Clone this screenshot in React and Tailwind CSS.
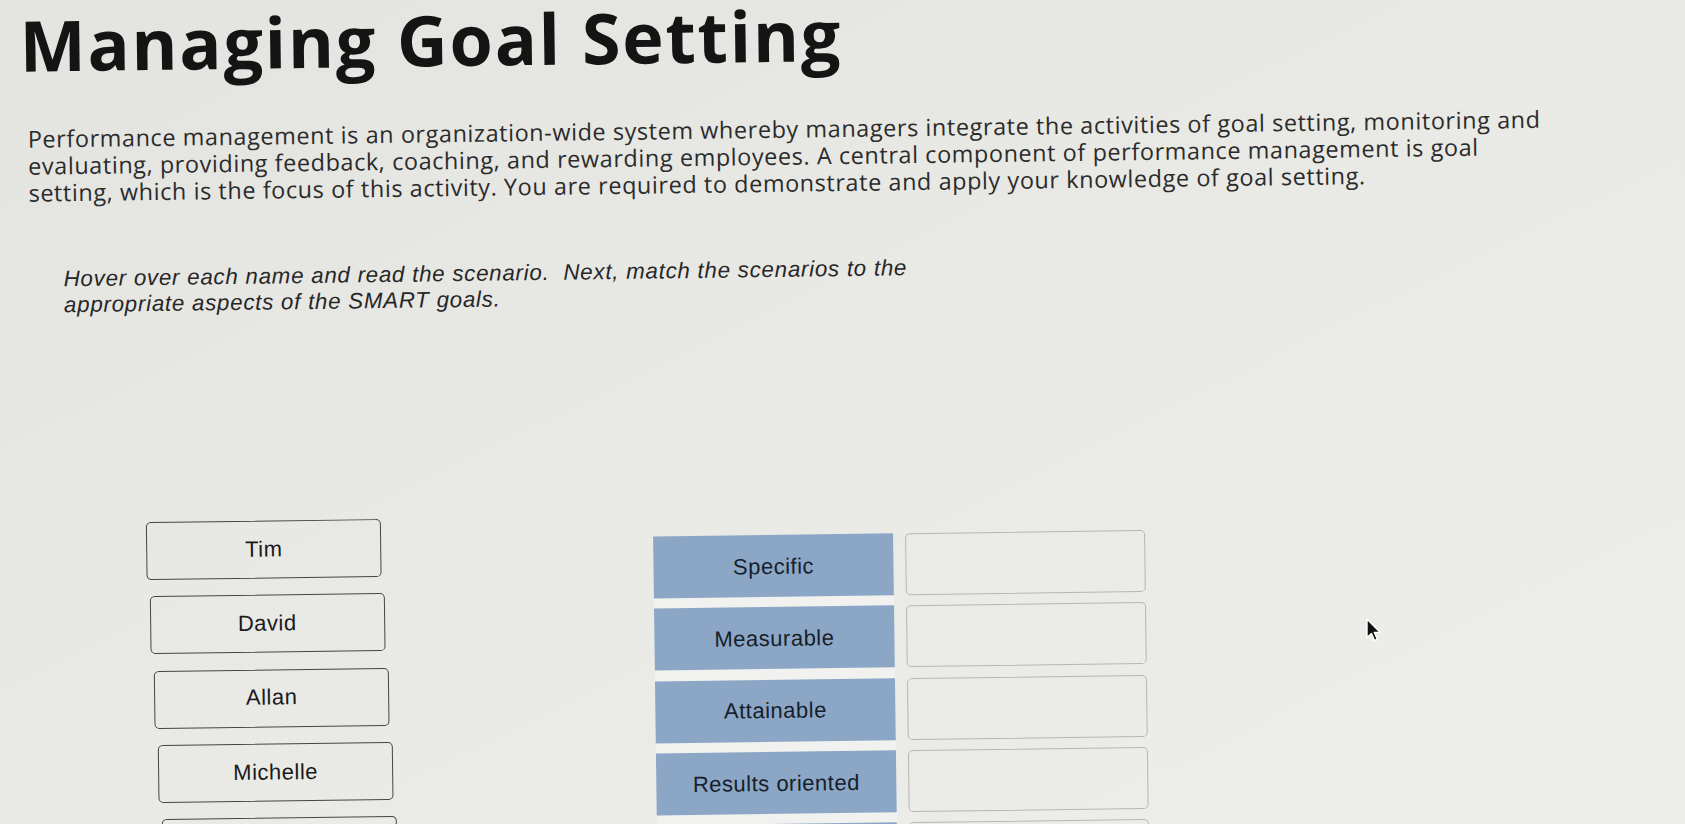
// App.jsx — goal-setting drag and drop activity
// the photo is tilted a little, so the sheet is turned by -0.75deg
const names = [
  { label: "Tim", shift: "ml-0" },
  { label: "David", shift: "ml-[2.5px]" },
  { label: "Allan", shift: "ml-[6px]" },
  { label: "Michelle", shift: "ml-[9px]" },
  { label: "", shift: "ml-[12px]" },
];

const aspects = ["Specific", "Measurable", "Attainable", "Results oriented", ""];

const Cursor = () => (
  <svg
    className="absolute left-[1364px] top-[617px]"
    width="18"
    height="26"
    viewBox="0 0 18 26"
  >
    <path
      d="M3 2 L3 20.5 L7.5 16.5 L10.5 23.5 L13.3 22.3 L10.3 15.4 L16 15.2 Z"
      fill="#111"
      stroke="#fff"
      strokeWidth="1.4"
      strokeLinejoin="round"
    />
  </svg>
);

export default function App() {
  return (
    <div className="relative w-[1685px] h-[824px] overflow-hidden bg-linear-to-br from-[#e3e3e0] via-[#e9e9e6] to-[#edede9] text-[#1d1d1d]">
      <div className="w-[1685px] origin-top-left -rotate-[0.75deg]">
        <h1 className="ml-[19px] font-['Open_Sans',sans-serif] font-bold text-[70px] leading-[90px] tracking-[1.8px] text-[#141414]">
          Managing Goal Setting
        </h1>

        <p className="ml-[26px] mt-[36px] font-['Open_Sans',sans-serif] text-[23.4px] leading-[27px] tracking-[0.6px] text-[#2b2b2b]">
          Performance management is an organization-wide system whereby managers integrate the activities of goal setting, monitoring and
          <br />
          evaluating, providing feedback, coaching, and rewarding employees. A central component of performance management is goal
          <br />
          setting, which is the focus of this activity. You are required to demonstrate and apply your knowledge of goal setting.
        </p>

        <p className="ml-[60px] mt-[60px] font-['Liberation_Sans',Arial,sans-serif] italic text-[22.3px] leading-[25.6px] tracking-[0.75px] text-[#262626]">
          Hover over each name and read the scenario.&nbsp; Next, match the scenarios to the
          <br />
          appropriate aspects of the SMART goals.
        </p>

        <div className="flex mt-[206px] font-['Liberation_Sans',Arial,sans-serif] text-[22px] tracking-[0.5px]">
          <div className="ml-[139px] flex flex-col gap-[16.3px]">
            {names.map((n, i) => (
              <div
                key={i}
                className={`${n.shift} w-[235px] h-[58px] flex items-center justify-center pb-[2px] border-[1.5px] border-[#454545] rounded-[5px] text-[#1a1a1a]`}
              >
                {n.label}
              </div>
            ))}
          </div>

          <div className="ml-[260px] mt-[21px] flex items-start gap-[12px]">
            <div className="flex flex-col gap-[10.3px] bg-[#f1f1ef]">
              {aspects.map((a, i) => (
                <div
                  key={i}
                  className="w-[240px] h-[62px] flex items-center justify-center bg-[#8ca7c5] text-[#16202c]"
                >
                  {a}
                </div>
              ))}
            </div>
            <div className="flex flex-col gap-[10.3px]">
              {aspects.map((a, i) => (
                <div
                  key={i}
                  className="w-[240px] h-[62px] border-[1.5px] border-[#b6b6b4] rounded-[5px]"
                />
              ))}
            </div>
          </div>
        </div>
      </div>

      <Cursor />
    </div>
  );
}
